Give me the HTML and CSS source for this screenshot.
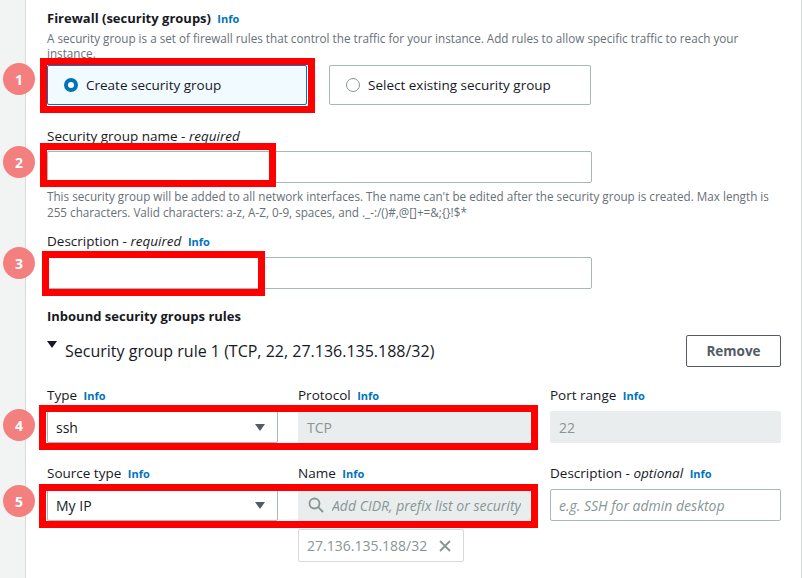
FILE: index.html
```html
<!DOCTYPE html>
<html>
<head>
<meta charset="utf-8">
<link rel="stylesheet" href="styles.css">
</head>
<body>
<div class="page">
  <div class="rail"></div>
  <div class="content">
    <div class="title">Firewall (security groups) <span class="info">Info</span></div>
    <div class="desc">A security group is a set of firewall rules that control the traffic for your instance. Add rules to allow specific traffic to reach your instance.</div>

    <div class="tiles">
      <div class="tile selected"><span class="radio on"></span>Create security group</div>
      <div class="tile"><span class="radio"></span>Select existing security group</div>
    </div>

    <div class="label lbl-name">Security group name - <i>required</i></div>
    <div class="input wide"></div>
    <div class="help">This security group will be added to all network interfaces. The name can't be edited after the security group is created. Max length is 255 characters. Valid characters: a-z, A-Z, 0-9, spaces, and ._-:/()#,@[]+=&amp;;{}!$*</div>

    <div class="label lbl-desc">Description - <i>required</i> <span class="info">Info</span></div>
    <div class="input wide"></div>

    <div class="subhead">Inbound security groups rules</div>

    <div class="rulehead">
      <div class="rule-title"><span class="caret"></span>Security group rule 1 (TCP, 22, 27.136.135.188/32)</div>
      <button class="btn">Remove</button>
    </div>

    <div class="grid row1">
      <div class="field">
        <div class="label">Type <span class="info">Info</span></div>
        <div class="input select">ssh<span class="arrow"></span></div>
      </div>
      <div class="field">
        <div class="label">Protocol <span class="info">Info</span></div>
        <div class="input disabled">TCP</div>
      </div>
      <div class="field">
        <div class="label">Port range <span class="info">Info</span></div>
        <div class="input disabled">22</div>
      </div>
    </div>

    <div class="grid row2">
      <div class="field">
        <div class="label">Source type <span class="info">Info</span></div>
        <div class="input select">My IP<span class="arrow"></span></div>
      </div>
      <div class="field">
        <div class="label">Name <span class="info">Info</span></div>
        <div class="input disabled search">
          <svg class="sicon" width="16" height="16" viewBox="0 0 16 16"><circle cx="6.5" cy="6.5" r="5" fill="none" stroke="#879596" stroke-width="1.8"/><line x1="10.2" y1="10.2" x2="14.5" y2="14.5" stroke="#879596" stroke-width="1.8" stroke-linecap="round"/></svg>
          <span class="ph">Add CIDR, prefix list or security</span>
        </div>
        <div class="token">27.136.135.188/32
          <svg class="x" width="14" height="14" viewBox="0 0 14 14"><path d="M2 2 L12 12 M12 2 L2 12" stroke="#879596" stroke-width="1.8" fill="none"/></svg>
        </div>
      </div>
      <div class="field">
        <div class="label">Description - <i>optional</i> <span class="info">Info</span></div>
        <div class="input"><span class="ph">e.g. SSH for admin desktop</span></div>
      </div>
    </div>
  </div>

  <div class="mark m1"></div>
  <div class="mark m2"></div>
  <div class="mark m3"></div>
  <div class="mark m4"></div>
  <div class="mark m5"></div>

  <div class="badge b1">1</div>
  <div class="badge b2">2</div>
  <div class="badge b3">3</div>
  <div class="badge b4">4</div>
  <div class="badge b5">5</div>
</div>
</body>
</html>
```

FILE: styles.css
```css
* { box-sizing: border-box; }
html, body { margin: 0; padding: 0; }
body {
  font-family: "Open Sans", "Noto Sans", Arial, sans-serif;
  color: #16191f;
  background: #fff;
}
.page {
  position: relative;
  width: 802px;
  height: 578px;
  overflow: hidden;
  display: flex;
}
.rail {
  width: 26px;
  flex: none;
  background: #f2f3f3;
  border-right: 1px solid #d5dbdb;
}
.content {
  flex: none;
  width: 776px;
  border-right: 1px solid #d5dbdb;
  padding: 10px 20px 0 21px;
}
.title {
  font-size: 13px;
  font-weight: 700;
  line-height: 16px;
}
.info {
  color: #0073bb;
  font-weight: 700;
  font-size: 11px;
  font-style: normal;
  margin-left: 3px;
}
.desc {
  margin-top: 4px;
  font-size: 11.7px;
  line-height: 15px;
  color: #687078;
  width: 712px;
}
.tiles {
  margin-top: 4px;
  display: grid;
  grid-template-columns: 260px 262px;
  column-gap: 22px;
}
.tile {
  height: 40px;
  border: 1px solid #aab7b8;
  border-radius: 2px;
  display: flex;
  align-items: center;
  padding-left: 16px;
  font-size: 13.5px;
}
.tile.selected {
  background: #f1faff;
  border-color: #0073bb;
}
.radio {
  width: 14px;
  height: 14px;
  border-radius: 50%;
  border: 1.5px solid #879596;
  margin-right: 8px;
  flex: none;
}
.radio.on {
  border: 4px solid #0073bb;
  background: #fff;
}
.label {
  font-size: 13.5px;
  line-height: 16px;
}
.label i { color: #16191f; }
.lbl-name { margin-top: 23px; }
.lbl-desc { margin-top: 13px; }
.input {
  height: 32px;
  border: 1px solid #aab7b8;
  border-radius: 2px;
  margin-top: 7px;
  display: flex;
  align-items: center;
  padding-left: 8px;
  font-size: 14px;
  position: relative;
}
.input.wide { width: 545px; }
.help {
  margin-top: 5px;
  font-size: 11.7px;
  line-height: 16px;
  color: #687078;
  width: 735px;
}
.subhead {
  margin-top: 19px;
  font-size: 13px;
  font-weight: 700;
  line-height: 16px;
}
.rulehead {
  margin-top: 11px;
  display: flex;
  justify-content: space-between;
  align-items: center;
}
.rule-title {
  font-size: 16px;
  line-height: 22px;
  display: flex;
  align-items: flex-start;
}
.caret {
  width: 0; height: 0;
  border-left: 5px solid transparent;
  border-right: 5px solid transparent;
  border-top: 7px solid #16191f;
  margin: 1px 8px 0 0;
}
.btn {
  width: 95px;
  height: 32px;
  background: #fff;
  border: 1px solid #545b64;
  border-radius: 2px;
  font-family: inherit;
  font-weight: 700;
  font-size: 13.5px;
  color: #545b64;
}
.grid {
  display: grid;
  grid-template-columns: 231px 232px 231px;
  column-gap: 20px;
}
.row1 { margin-top: 20px; }
.row2 { margin-top: 22px; }
.input.select { padding-left: 8px; }
.arrow {
  position: absolute;
  right: 12px;
  top: 12px;
  width: 0; height: 0;
  border-left: 5px solid transparent;
  border-right: 5px solid transparent;
  border-top: 7px solid #545b64;
}
.input.disabled {
  background: #eaeded;
  border-color: #eaeded;
  color: #879596;
}
.search { padding-left: 9px; }
.sicon { margin-right: 8px; flex: none; }
.ph {
  font-style: italic;
  color: #879596;
  white-space: nowrap;
  overflow: hidden;
}
.token {
  margin-top: 8px;
  width: 166px;
  height: 33px;
  border: 1px solid #d5dbdb;
  border-radius: 2px;
  display: flex;
  align-items: center;
  padding-left: 8px;
  font-size: 14px;
  color: #879596;
}
.x { margin-left: 11px; }

/* annotation overlays */
.mark {
  position: absolute;
  border: 7px solid #ff0000;
}
.m1 { left: 40px; top: 58px; width: 275px; height: 55px; }
.m2 { left: 40px; top: 143px; width: 236px; height: 44px; }
.m3 { left: 42px; top: 251px; width: 223px; height: 45px; }
.m4 { left: 39px; top: 405px; width: 499px; height: 45px; }
.m5 { left: 39px; top: 484px; width: 499px; height: 44px; }
.badge {
  position: absolute;
  left: 3px;
  width: 32px;
  height: 32px;
  border-radius: 50%;
  background: #f47f7f;
  color: #fff;
  font-weight: 700;
  font-size: 14px;
  display: flex;
  align-items: center;
  justify-content: center;
}
.b1 { top: 63px; }
.b2 { top: 146px; }
.b3 { top: 247px; }
.b4 { top: 409px; }
.b5 { top: 485px; }
```
